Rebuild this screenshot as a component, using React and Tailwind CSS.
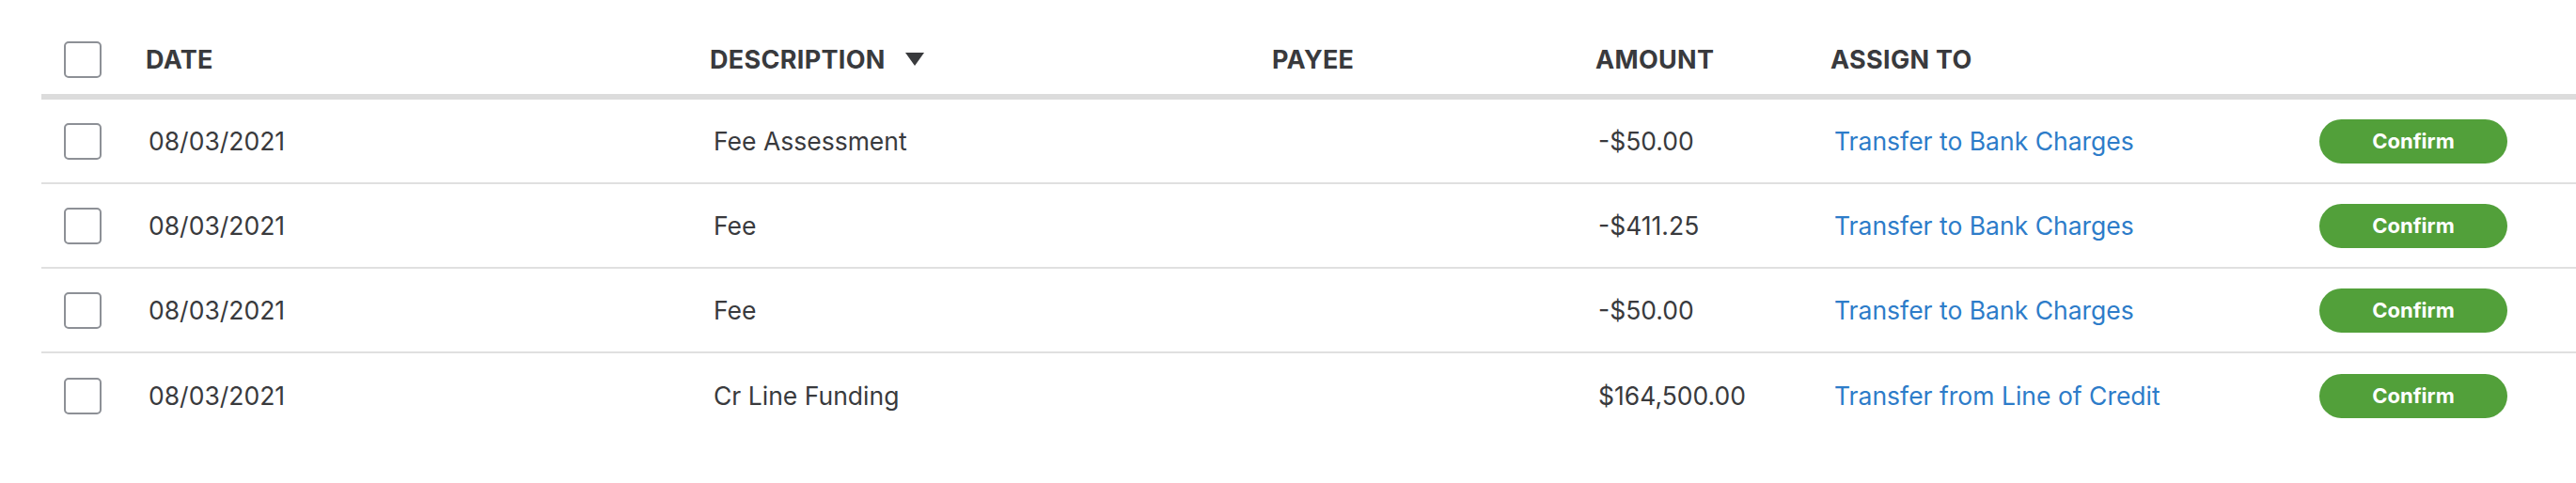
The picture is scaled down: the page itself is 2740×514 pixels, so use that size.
import React from "react";

const rows = [
  { date: "08/03/2021", desc: "Fee Assessment", amount: "-$50.00", assign: "Transfer to Bank Charges" },
  { date: "08/03/2021", desc: "Fee", amount: "-$411.25", assign: "Transfer to Bank Charges" },
  { date: "08/03/2021", desc: "Fee", amount: "-$50.00", assign: "Transfer to Bank Charges" },
  { date: "08/03/2021", desc: "Cr Line Funding", amount: "$164,500.00", assign: "Transfer from Line of Credit" },
];

function Box() {
  return <div className="w-[40px] h-[39px] rounded-[5px] border-2 border-[#8d9096] bg-white shrink-0" />;
}

export default function App() {
  return (
    <div className="w-[2740px] h-[514px] bg-white text-[#393a3d]" style={{ fontFamily: "Inter, 'Noto Sans', sans-serif" }}>
      <div className="ml-[44px]">
        {/* header */}
        <div className="flex items-center h-[106px] pt-[26px] border-b-[6px] border-[#dcdcdc] pl-[24px] text-[27px] font-bold leading-none tracking-[0.3px]">
          <Box />
          <div className="w-[600px] ml-[47px]">DATE</div>
          <div className="w-[598px] flex items-center">
            <span>DESCRIPTION</span>
            <svg className="ml-[21px]" width="20" height="14" viewBox="0 0 20 14">
              <path d="M0 0 H20 L10 14 Z" fill="#393a3d" />
            </svg>
          </div>
          <div className="w-[344px]">PAYEE</div>
          <div className="w-[250px]">AMOUNT</div>
          <div>ASSIGN TO</div>
        </div>
        {rows.map((r, i) => (
          <div
            key={i}
            className={`flex items-center h-[90px] pl-[24px] text-[26.5px] leading-none ${i < rows.length - 1 ? "border-b-2 border-[#e0e0e0]" : ""}`}
          >
            <Box />
            <div className="w-[600px] ml-[47px] pl-[3px]">{r.date}</div>
            <div className="w-[598px] pl-[4px]">{r.desc}</div>
            <div className="w-[344px]" />
            <div className="w-[250px] pl-[3px]">{r.amount}</div>
            <div className="w-[520px] pl-[4px] text-[#2d7cc9]">{r.assign}</div>
            <button className="w-[200px] h-[47px] rounded-full bg-[#52a03a] text-white text-[22px] font-bold leading-none">
              Confirm
            </button>
          </div>
        ))}
      </div>
    </div>
  );
}
